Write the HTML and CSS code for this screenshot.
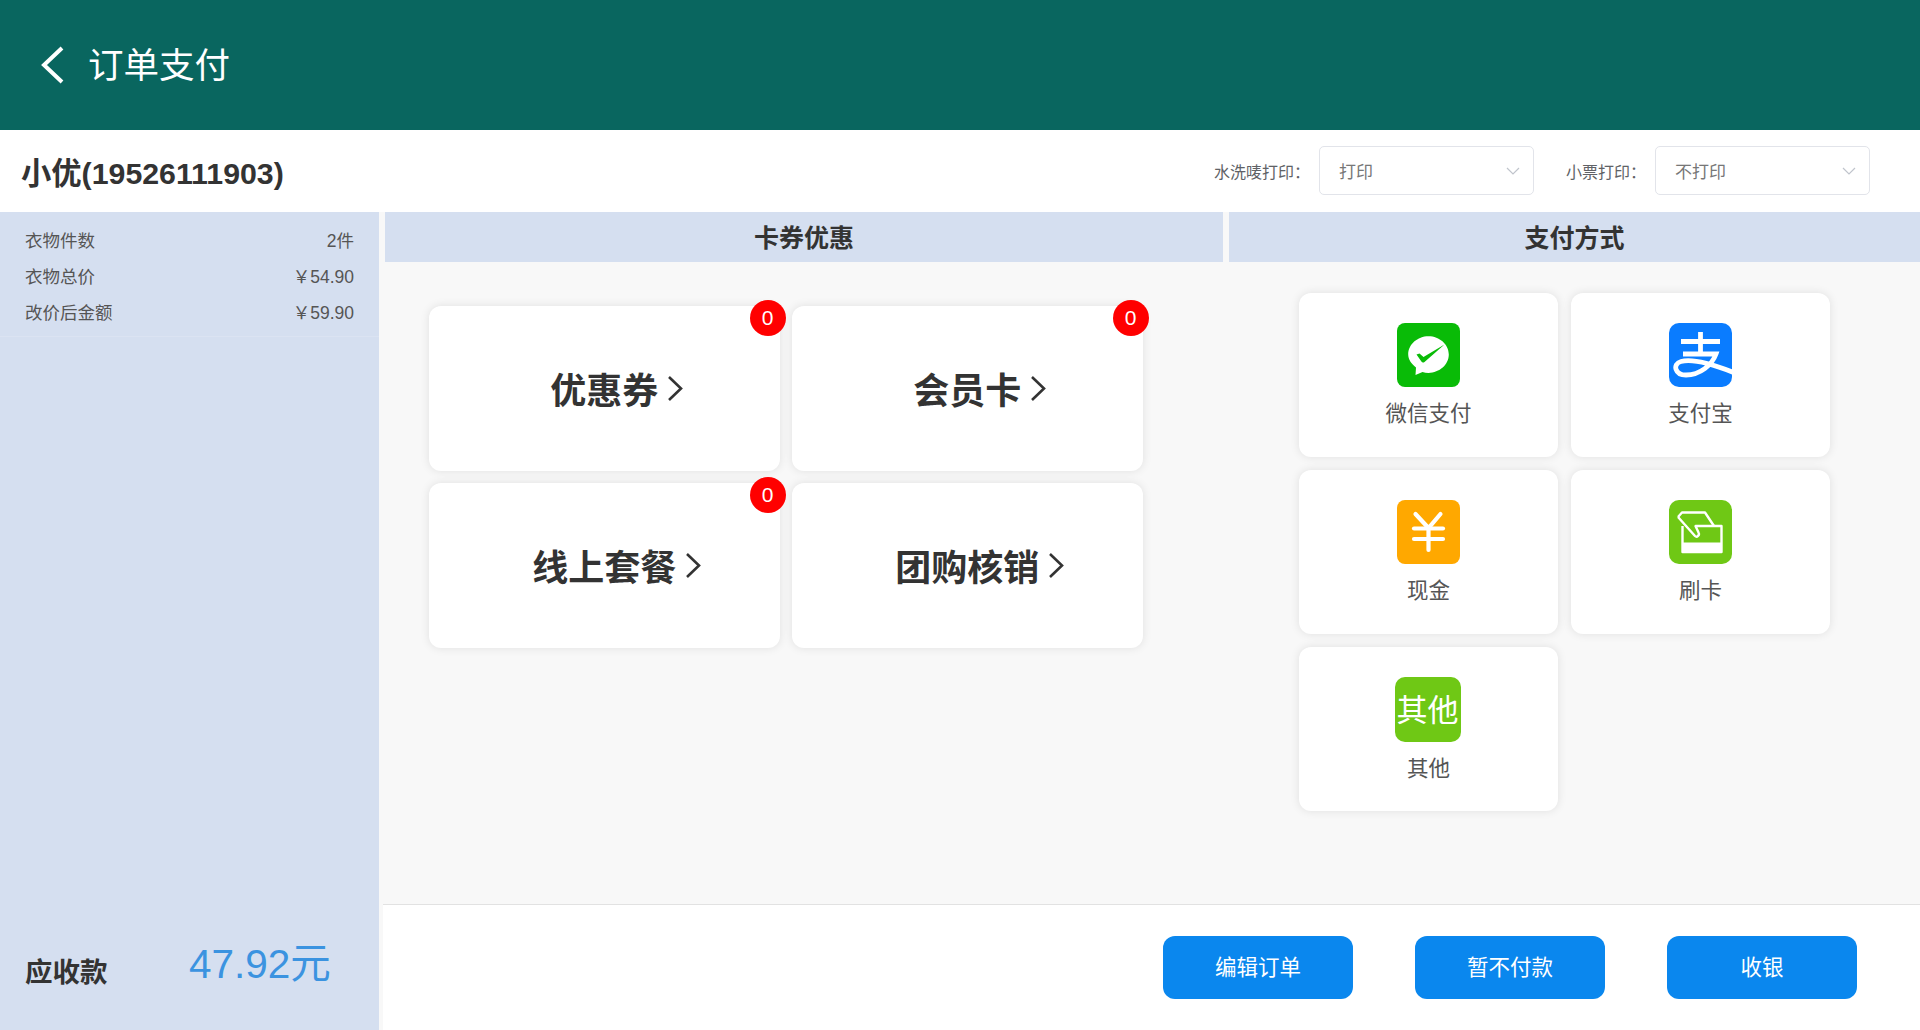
FILE: index.html
```html
<!DOCTYPE html>
<html>
<head>
  <meta charset="utf-8">
  <title>订单支付</title>
  <link rel="stylesheet" href="styles.css">
</head>
<body>
  <div class="header">
    <svg class="back-icon" width="26" height="38" viewBox="0 0 26 38"><path d="M23 2 L5 19 L23 36" fill="none" stroke="#fff" stroke-width="4"/></svg>
    <span class="header-title">订单支付</span>
  </div>

  <div class="sub-bar">
    <div class="customer">小优(19526111903)</div>
    <div class="print-options">
      <span class="print-label">水洗唛打印&#65306;</span>
      <div class="select">
        <span>打印</span>
        <svg width="14" height="8" viewBox="0 0 14 8"><path d="M1 1 L7 7 L13 1" fill="none" stroke="#c0c4cc" stroke-width="1.2"/></svg>
      </div>
      <span class="print-label second">小票打印&#65306;</span>
      <div class="select">
        <span>不打印</span>
        <svg width="14" height="8" viewBox="0 0 14 8"><path d="M1 1 L7 7 L13 1" fill="none" stroke="#c0c4cc" stroke-width="1.2"/></svg>
      </div>
    </div>
  </div>

  <div class="content">
    <div class="summary">
      <div class="summary-list">
        <div class="summary-row"><span>衣物件数</span><span>2件</span></div>
        <div class="summary-row"><span>衣物总价</span><span>&#65509;54.90</span></div>
        <div class="summary-row"><span>改价后金额</span><span>&#65509;59.90</span></div>
      </div>
      <div class="summary-total">
        <span class="total-label">应收款</span>
        <span class="total-value">47.92元</span>
      </div>
    </div>

    <div class="main">
      <div class="columns">
        <div class="coupon-col">
          <div class="col-title">卡券优惠</div>
          <div class="coupon-grid">
            <div class="coupon-card">
              <span>优惠券</span>
              <svg width="17" height="27" viewBox="0 0 17 27"><path d="M2 2 L14 13.5 L2 25" fill="none" stroke="#333" stroke-width="2.6"/></svg>
              <span class="badge">0</span>
            </div>
            <div class="coupon-card">
              <span>会员卡</span>
              <svg width="17" height="27" viewBox="0 0 17 27"><path d="M2 2 L14 13.5 L2 25" fill="none" stroke="#333" stroke-width="2.6"/></svg>
              <span class="badge">0</span>
            </div>
            <div class="coupon-card">
              <span>线上套餐</span>
              <svg width="17" height="27" viewBox="0 0 17 27"><path d="M2 2 L14 13.5 L2 25" fill="none" stroke="#333" stroke-width="2.6"/></svg>
              <span class="badge">0</span>
            </div>
            <div class="coupon-card">
              <span>团购核销</span>
              <svg width="17" height="27" viewBox="0 0 17 27"><path d="M2 2 L14 13.5 L2 25" fill="none" stroke="#333" stroke-width="2.6"/></svg>
            </div>
          </div>
        </div>

        <div class="pay-col">
          <div class="col-title">支付方式</div>
          <div class="pay-grid">
            <div class="pay-card">
              <svg class="pay-icon" width="63" height="64" viewBox="0 0 63 64">
                <rect width="63" height="64" rx="8" fill="#09bb07"/>
                <path d="M31.500 13.300 C42.500 13.300 51.800 21.500 51.800 31.600 C51.800 41.700 42.500 49.900 31.500 49.900 C29.300 49.900 27.400 49.600 25.500 49 L18.500 52 L19 44.500 C14.300 41 11.200 36.500 11.200 31.600 C11.200 21.500 20.500 13.300 31.500 13.300 Z" fill="#fff"/>
                <path d="M19.500 31.500 L22.500 30.500 L26.500 34 L47.500 21.500 L27.500 39 C26.300 40 25 39.700 24.400 38.500 Z" fill="#09bb07"/>
              </svg>
              <span>微信支付</span>
            </div>
            <div class="pay-card">
              <svg class="pay-icon" width="63" height="64" viewBox="0 0 63 64">
                <defs><clipPath id="alipay-clip"><rect width="63" height="64" rx="10"/></clipPath></defs>
                <rect width="63" height="64" rx="10" fill="#0a7cff"/>
                <g clip-path="url(#alipay-clip)" fill="none" stroke="#fff" stroke-width="4.8">
                  <path d="M12 18.500 H51"/>
                  <path d="M31.500 9 V31"/>
                  <path d="M14 31 H47 C43 42 31 52 17 52 C6 52 3 41 12 38.500 C24 35 46 42 66 50"/>
                </g>
              </svg>
              <span>支付宝</span>
            </div>
            <div class="pay-card">
              <svg class="pay-icon" width="63" height="64" viewBox="0 0 63 64">
                <rect width="63" height="64" rx="8" fill="#ffa800"/>
                <g fill="none" stroke="#fff" stroke-width="4.2" stroke-linecap="round">
                  <path d="M18.500 14 L31.500 28 L43.500 14"/>
                  <path d="M17 28.500 H46"/>
                  <path d="M17 39 H46"/>
                  <path d="M31.500 28 V50"/>
                </g>
              </svg>
              <span>现金</span>
            </div>
            <div class="pay-card">
              <svg class="pay-icon" width="63" height="64" viewBox="0 0 63 64">
                <rect width="63" height="64" rx="10" fill="#6fc815"/>
                <g fill="none" stroke="#fff" stroke-width="2.4" stroke-linejoin="round">
                  <path d="M9 17 L13 12.500 H36 L45 26"/>
                  <path d="M9 17 L26 36 C28 38 31 35 29.500 32.500 L26.500 26 H52.500 V52 H13.500 V26"/>
                </g>
                <rect x="13.500" y="42.500" width="39" height="9.500" fill="#fff"/>
              </svg>
              <span>刷卡</span>
            </div>
            <div class="pay-card">
              <div class="other-icon">其他</div>
              <span>其他</span>
            </div>
          </div>
        </div>
      </div>

      <div class="footer">
        <button>编辑订单</button>
        <button>暂不付款</button>
        <button>收银</button>
      </div>
    </div>
  </div>
</body>
</html>
```

FILE: styles.css
```css
* {
  box-sizing: border-box;
}
html, body {
  height: 100%;
}
body {
  margin: 0;
  height: 1030px;
  overflow: hidden;
  display: flex;
  flex-direction: column;
  font-family: "Liberation Sans", "Noto Sans CJK SC", sans-serif;
  color: #333;
  background: #fff;
}

/* top bar */
.header {
  height: 130px;
  flex-shrink: 0;
  display: flex;
  align-items: center;
  padding-left: 39px;
  background: #09665f;
  color: #fff;
}
.back-icon {
  margin-right: 23px;
}
.header-title {
  padding-bottom: 5px;
  font-size: 35.5px;
}

.sub-bar {
  height: 82px;
  flex-shrink: 0;
  display: flex;
  align-items: center;
  justify-content: space-between;
  padding: 0 50px 0 21px;
}
.customer {
  font-size: 30.3px;
  font-weight: bold;
}
.print-options {
  display: flex;
  align-items: center;
  padding-bottom: 1px;
}
.print-label {
  font-size: 16px;
  color: #606266;
  margin-right: 9px;
}
.print-label.second {
  margin-left: 32px;
}
.select {
  width: 215px;
  height: 49px;
  display: flex;
  align-items: center;
  justify-content: space-between;
  padding: 0 13px 0 19px;
  font-size: 17px;
  color: #777;
  background: #fff;
  border: 1px solid #e2e4ea;
  border-radius: 5px;
}

.content {
  flex: 1;
  display: flex;
  min-height: 0;
}

/* left summary */
.summary {
  width: 379px;
  flex-shrink: 0;
  display: flex;
  flex-direction: column;
  justify-content: space-between;
  background: #d5dff0;
}
.summary-list {
  height: 125px;
  padding: 9px 25px 0;
  border-bottom: 1px solid #dbe3f2;
}
.summary-row {
  height: 36px;
  display: flex;
  align-items: center;
  justify-content: space-between;
  font-size: 17.5px;
  color: #555;
}
.summary-total {
  height: 126px;
  display: flex;
  align-items: center;
  padding-left: 25px;
}
.total-label {
  width: 164px;
  padding-top: 5px;
  font-size: 27.5px;
  font-weight: bold;
}
.total-value {
  padding-bottom: 14px;
  font-size: 40.5px;
  color: #3b93e0;
}

.main {
  flex: 1;
  min-width: 0;
  display: flex;
  flex-direction: column;
  background: #f8f8f8;
}
.columns {
  flex: 1;
  display: flex;
  gap: 6px;
  padding-left: 6px;
  min-height: 0;
}
.col-title {
  height: 50px;
  display: flex;
  align-items: center;
  justify-content: center;
  padding-bottom: 2px;
  font-size: 25px;
  font-weight: bold;
  background: #d5dff0;
}

/* coupons */
.coupon-col {
  width: 838px;
  flex-shrink: 0;
}
.coupon-grid {
  display: grid;
  grid-template-columns: 350.5px 350.5px;
  grid-auto-rows: 164.5px;
  gap: 12.5px;
  padding: 44px 0 0 44px;
}
.coupon-card {
  position: relative;
  display: flex;
  align-items: center;
  justify-content: center;
  gap: 9px;
  padding-left: 26px;
  font-size: 36px;
  font-weight: bold;
  background: #fff;
  border-radius: 12px;
  box-shadow: 0 0 10px rgba(0, 0, 0, 0.1);
}
.badge {
  position: absolute;
  top: -6px;
  right: -6px;
  width: 36px;
  height: 36px;
  display: flex;
  align-items: center;
  justify-content: center;
  border-radius: 50%;
  background: #f00;
  color: #fff;
  font-size: 21px;
  font-weight: normal;
}

/* pay methods */
.pay-col {
  flex: 1;
  min-width: 0;
}
.pay-grid {
  display: grid;
  grid-template-columns: 259px 259px;
  grid-auto-rows: 164px;
  gap: 13px;
  padding: 31px 0 0 70px;
}
.pay-card {
  display: flex;
  flex-direction: column;
  align-items: center;
  padding-top: 30px;
  font-size: 21.5px;
  color: #555;
  background: #fff;
  border-radius: 12px;
  box-shadow: 0 0 10px rgba(0, 0, 0, 0.1);
}
.pay-card span {
  margin-top: 11px;
  line-height: 32px;
}
.pay-icon {
  flex-shrink: 0;
}
.other-icon {
  width: 66px;
  height: 65px;
  flex-shrink: 0;
  display: flex;
  align-items: center;
  justify-content: center;
  margin-right: 2px;
  padding-bottom: 4px;
  border-radius: 10px;
  background: #6fc815;
  color: #fff;
  font-size: 31px;
}

.footer {
  height: 126px;
  flex-shrink: 0;
  display: flex;
  align-items: center;
  justify-content: flex-end;
  gap: 62px;
  margin-left: 4px;
  padding-right: 63px;
  background: #fff;
  border-top: 1px solid #e2e2e2;
}
.footer button {
  width: 190px;
  height: 63px;
  padding: 0 0 4px;
  font-family: inherit;
  font-size: 21.5px;
  color: #fff;
  background: #0a87ee;
  border: none;
  border-radius: 12px;
}
```
